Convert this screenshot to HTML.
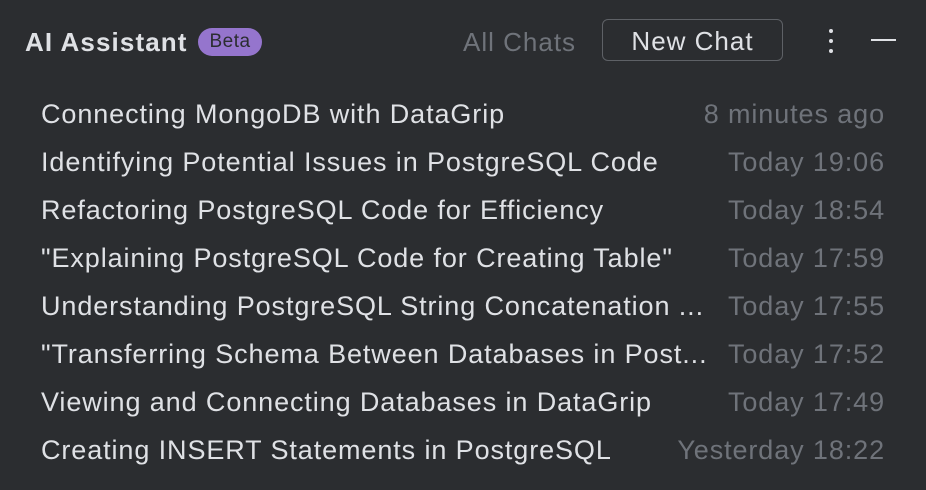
<!DOCTYPE html>
<html><head><style>
body{margin:0;width:926px;height:490px;background:#2b2d30;font-family:"Liberation Sans",sans-serif;color:#dfe1e5;position:relative;overflow:hidden}
.t{position:absolute;left:25px;top:27px;font-size:26px;font-weight:bold;letter-spacing:1.1px}
.beta{position:absolute;left:198px;top:28px;width:64px;height:28px;border-radius:14px;background:#9575cd;color:#2b2d30;font-size:19px;line-height:28px;text-align:center;letter-spacing:0.5px}
.all{position:absolute;left:463px;top:27px;font-size:26px;color:#6f737a;letter-spacing:1px}
.btn{position:absolute;left:602px;top:19px;width:179px;height:40px;border:1px solid #5e6166;border-radius:6px;font-size:26px;line-height:42px;text-align:center;letter-spacing:1px}
.dots{position:absolute;left:829px;top:29px}
.dots i{display:block;width:4px;height:4px;border-radius:2px;background:#dfe1e5;margin-bottom:6px}
.min{position:absolute;left:871px;top:39px;width:25px;height:2px;background:#dfe1e5}
.r{position:absolute;left:41px;right:41px;font-size:27px;height:34px;line-height:34px;letter-spacing:0.9px;white-space:nowrap}
.r span{position:absolute;right:0;color:#6f737a}
</style></head><body>
<div class="t">AI Assistant</div><div class="beta">Beta</div>
<div class="all">All Chats</div><div class="btn">New Chat</div>
<div class="dots"><i></i><i></i><i></i></div><div class="min"></div>
<div class="r" style="top:97px">Connecting MongoDB with DataGrip<span>8 minutes ago</span></div>
<div class="r" style="top:145px">Identifying Potential Issues in PostgreSQL Code<span>Today 19:06</span></div>
<div class="r" style="top:193px">Refactoring PostgreSQL Code for Efficiency<span>Today 18:54</span></div>
<div class="r" style="top:241px">"Explaining PostgreSQL Code for Creating Table"<span>Today 17:59</span></div>
<div class="r" style="top:289px">Understanding PostgreSQL String Concatenation ...<span>Today 17:55</span></div>
<div class="r" style="top:337px">"Transferring Schema Between Databases in Post...<span>Today 17:52</span></div>
<div class="r" style="top:385px">Viewing and Connecting Databases in DataGrip<span>Today 17:49</span></div>
<div class="r" style="top:433px">Creating INSERT Statements in PostgreSQL<span>Yesterday 18:22</span></div>
</body></html>
